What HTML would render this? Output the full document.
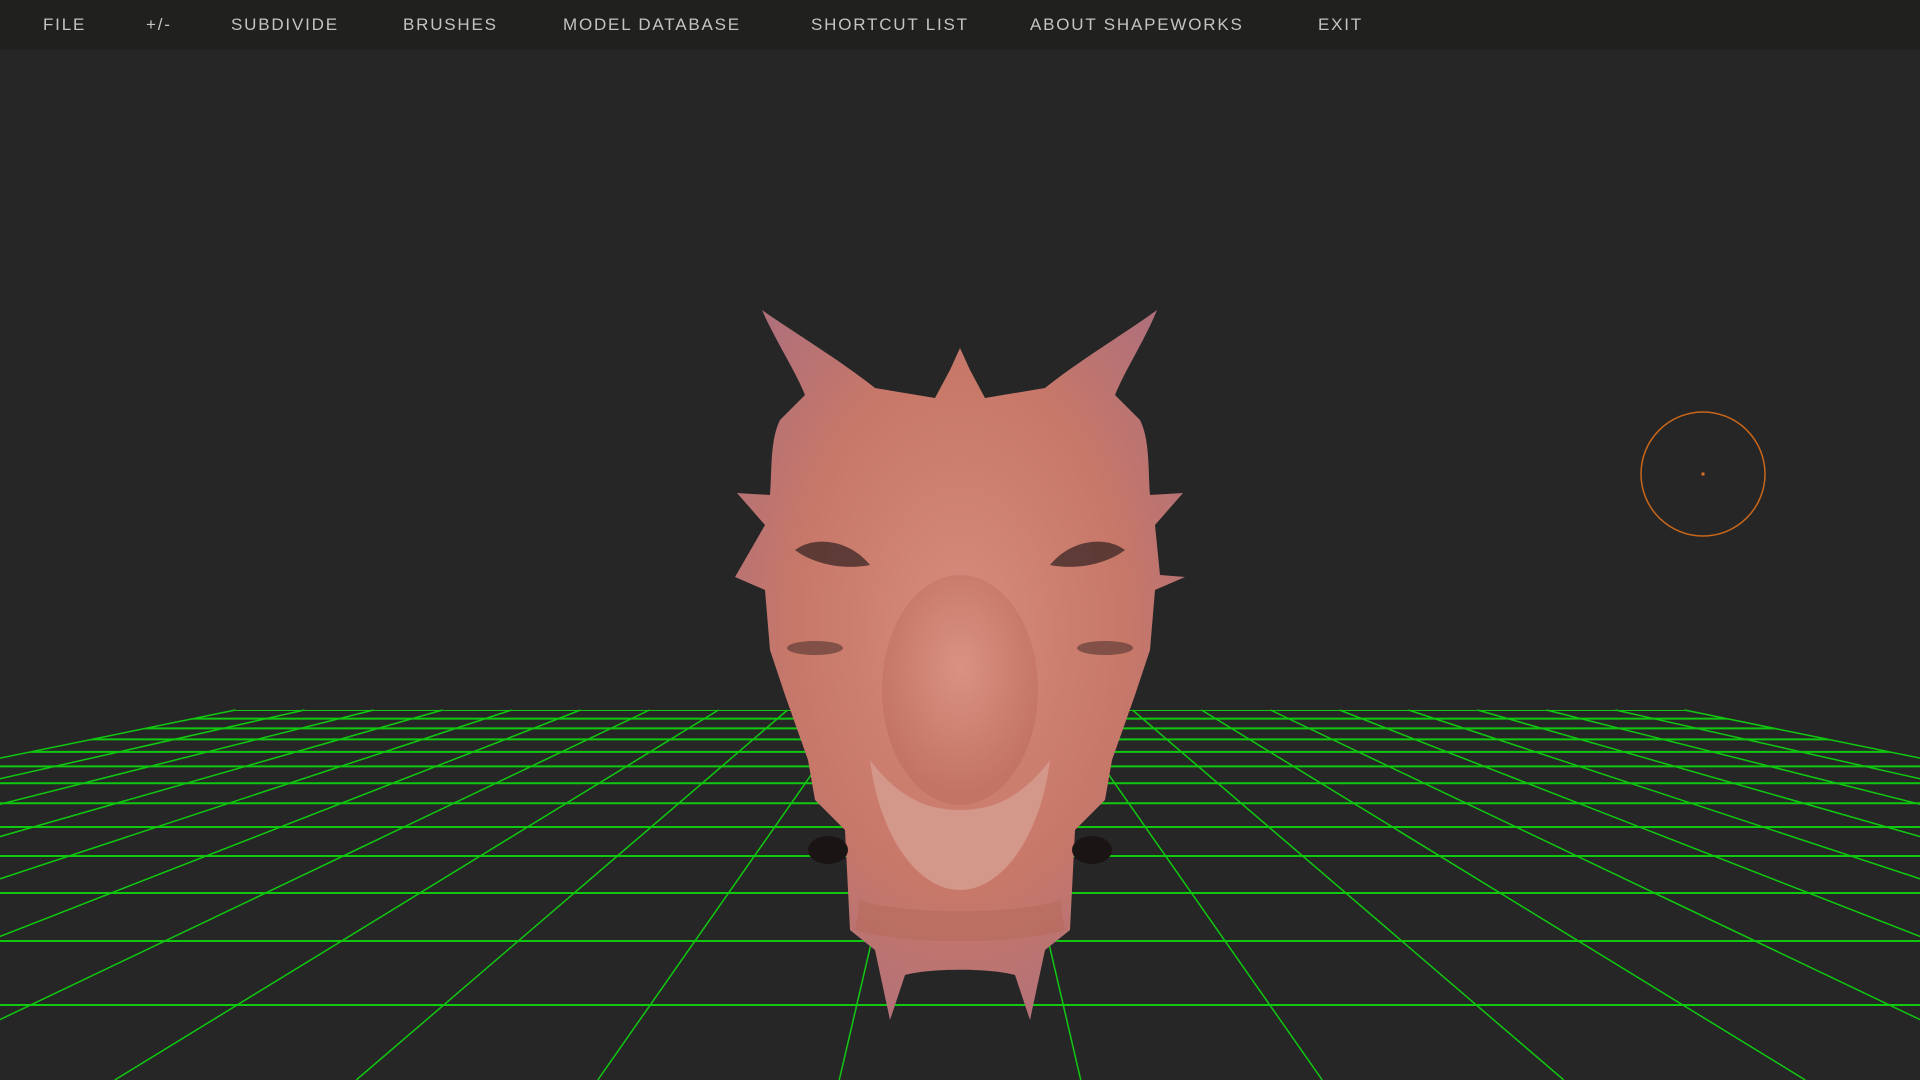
<!DOCTYPE html>
<html><head><meta charset="utf-8"><style>
html,body{margin:0;padding:0;background:#262626;width:1920px;height:1080px;overflow:hidden}
.bar{position:absolute;left:0;top:0;width:1920px;height:50px;background:#20201e}
.bar span{position:absolute;top:15px;font-family:"Liberation Sans",sans-serif;font-size:17px;color:#c4c4c4;letter-spacing:1.8px;white-space:nowrap}
svg{position:absolute;left:0;top:0}
</style></head><body>
<svg width="1920" height="1080" viewBox="0 0 1920 1080">
<defs>
<clipPath id="g"><polygon points="235.5,710 1684.5,710 3495,1080 -1575,1080"/></clipPath>
<radialGradient id="skin" cx="50%" cy="45%" r="60%">
<stop offset="0" stop-color="#d58c7c"/><stop offset="0.6" stop-color="#c87868"/><stop offset="1" stop-color="#b0707a"/></radialGradient>
<radialGradient id="nose" cx="50%" cy="40%" r="55%">
<stop offset="0" stop-color="#d99282"/><stop offset="1" stop-color="#c47464"/></radialGradient>
</defs>
<g stroke="#10c810" stroke-width="2" fill="none">
<g clip-path="url(#g)">
<line x1="-10" y1="710" x2="1930" y2="710"/><line x1="-10" y1="718.6" x2="1930" y2="718.6"/>
<line x1="-10" y1="728.4" x2="1930" y2="728.4"/><line x1="-10" y1="739.4" x2="1930" y2="739.4"/>
<line x1="-10" y1="751.9" x2="1930" y2="751.9"/><line x1="-10" y1="766.4" x2="1930" y2="766.4"/>
<line x1="-10" y1="783.3" x2="1930" y2="783.3"/><line x1="-10" y1="803.2" x2="1930" y2="803.2"/>
<line x1="-10" y1="827" x2="1930" y2="827"/><line x1="-10" y1="856" x2="1930" y2="856"/>
<line x1="-10" y1="893" x2="1930" y2="893"/><line x1="-10" y1="941" x2="1930" y2="941"/>
<line x1="-10" y1="1005" x2="1930" y2="1005"/>
</g>
<g stroke-width="1.5">
<line x1="925.5" y1="710" x2="839.25" y2="1080"/><line x1="856.5" y1="710" x2="597.75" y2="1080"/>
<line x1="787.5" y1="710" x2="356.25" y2="1080"/><line x1="718.5" y1="710" x2="114.75" y2="1080"/>
<line x1="649.5" y1="710" x2="-126.75" y2="1080"/><line x1="580.5" y1="710" x2="-368.25" y2="1080"/>
<line x1="511.5" y1="710" x2="-609.75" y2="1080"/><line x1="442.5" y1="710" x2="-851.25" y2="1080"/>
<line x1="373.5" y1="710" x2="-1092.75" y2="1080"/><line x1="304.5" y1="710" x2="-1334.25" y2="1080"/>
<line x1="235.5" y1="710" x2="-1575.75" y2="1080"/>
<line x1="994.5" y1="710" x2="1080.75" y2="1080"/><line x1="1063.5" y1="710" x2="1322.25" y2="1080"/>
<line x1="1132.5" y1="710" x2="1563.75" y2="1080"/><line x1="1201.5" y1="710" x2="1805.25" y2="1080"/>
<line x1="1270.5" y1="710" x2="2046.75" y2="1080"/><line x1="1339.5" y1="710" x2="2288.25" y2="1080"/>
<line x1="1408.5" y1="710" x2="2529.75" y2="1080"/><line x1="1477.5" y1="710" x2="2771.25" y2="1080"/>
<line x1="1546.5" y1="710" x2="3012.75" y2="1080"/><line x1="1615.5" y1="710" x2="3254.25" y2="1080"/>
<line x1="1684.5" y1="710" x2="3495.75" y2="1080"/>
</g>
</g>
<!-- dragon -->
<path fill="url(#skin)" d="M762,310 C790,330 840,360 875,388 L935,398 L950,370 L960,348 L970,370 L985,398 L1045,388 C1080,360 1130,330 1157,310 C1145,340 1125,370 1115,395 L1140,420 C1150,440 1148,470 1150,495 L1183,493 L1155,525 L1160,575 L1185,577 L1155,590 L1150,650 L1135,695 L1112,760 L1105,800 L1075,830 L1070,930 L1045,950 L1030,1020 L1015,975 C990,968 930,968 905,975 L890,1020 L875,950 L850,930 L845,830 L815,800 L808,760 L785,695 L770,650 L765,590 L735,577 L765,525 L737,493 L770,495 C772,470 770,440 780,420 L805,395 C795,370 775,340 762,310 Z"/>
<path d="M795,550 C815,535 850,540 870,565 C845,570 815,565 795,550 Z" fill="#3a2624" opacity="0.75"/>
<path d="M1125,550 C1105,535 1070,540 1050,565 C1075,570 1105,565 1125,550 Z" fill="#3a2624" opacity="0.75"/>
<ellipse cx="815" cy="648" rx="28" ry="7" fill="#3a2624" opacity="0.5"/>
<ellipse cx="1105" cy="648" rx="28" ry="7" fill="#3a2624" opacity="0.5"/>
<path d="M870,760 C880,840 920,890 960,890 C1000,890 1040,840 1050,760 C1020,800 990,810 960,810 C930,810 900,800 870,760 Z" fill="#d4988a"/>
<ellipse cx="960" cy="690" rx="78" ry="115" fill="url(#nose)"/>
<path d="M860,900 C900,915 1020,915 1060,900 L1065,930 C1020,945 900,945 855,930 Z" fill="#b86c5e" opacity="0.7"/>
<ellipse cx="828" cy="850" rx="20" ry="14" fill="#1a1414"/>
<ellipse cx="1092" cy="850" rx="20" ry="14" fill="#1a1414"/>
<!-- cursor -->
<circle cx="1703" cy="474" r="62" fill="none" stroke="#c8661a" stroke-width="1.5"/>
<rect x="1701.5" y="472.5" width="3" height="3" fill="#d87020"/>
</svg>
<div class="bar">
<span style="left:43px">FILE</span>
<span style="left:146px">+/-</span>
<span style="left:231px">SUBDIVIDE</span>
<span style="left:403px">BRUSHES</span>
<span style="left:563px">MODEL DATABASE</span>
<span style="left:811px">SHORTCUT LIST</span>
<span style="left:1030px">ABOUT SHAPEWORKS</span>
<span style="left:1318px">EXIT</span>
</div>
</body></html>
